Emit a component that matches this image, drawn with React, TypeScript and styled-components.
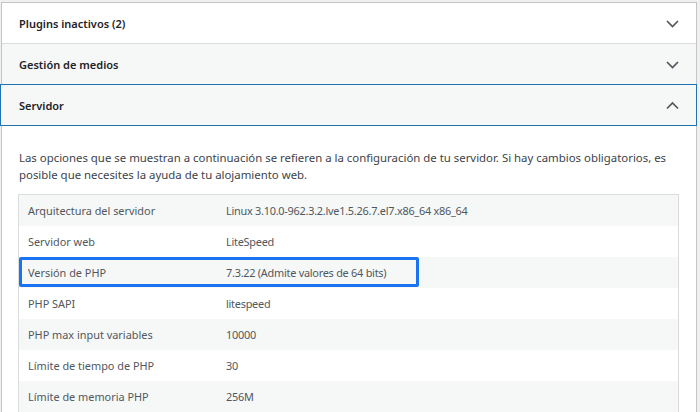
import React from "react";
import styled, { createGlobalStyle } from "styled-components";

const Global = createGlobalStyle`
  html, body { margin: 0; padding: 0; background: #f0f0f1; }
  body { font-family: "Noto Sans", "Open Sans", "Liberation Sans", sans-serif; }
  * { box-sizing: border-box; }
`;

const Page = styled.div`
  padding: 2px 3px 0 1px;
  width: 700px;
  height: 412px;
  overflow: hidden;
`;

const Panel = styled.div`
  background: #fff;
  border: 1px solid #c3c4c7;
  border-bottom: none;
  min-height: 420px;
`;

const Header = styled.div<{ $bg: string; $active?: boolean }>`
  display: flex;
  align-items: center;
  justify-content: space-between;
  height: ${(p) => (p.$active ? "42px" : "41px")};
  padding: 0 17px 0 17px;
  background: ${(p) => p.$bg};
  border-bottom: 1px solid #dcdcde;
  font-size: 11px;
  font-weight: 600;
  color: #1d2327;
  ${(p) =>
    p.$active &&
    `
    border: 1px solid #2271b1;
    margin: -1px -1px 0 -2px;
    padding-left: 18px;
    padding-right: 17px;
    position: relative;
  `}
`;

const Chevron = styled.svg`
  width: 13px;
  height: 13px;
  flex: none;
`;

const Content = styled.div`
  padding: 24px 16px 0 16px;
`;

const Description = styled.p`
  margin: 0 0 11px 1px;
  font-size: 11.4px;
  line-height: 16.6px;
  color: #3c434a;
`;

const Table = styled.div`
  border: 1px solid #dcdcde;
  border-bottom: none;
  margin-right: 1px;
`;

const Row = styled.div<{ $alt: boolean }>`
  position: relative;
  display: grid;
  grid-template-columns: 198px 1fr;
  align-items: center;
  height: 31px;
  background: ${(p) => (p.$alt ? "#f6f7f7" : "#fff")};
  font-size: 10.9px;
  color: #50575e;
`;

const Cell = styled.div`
  padding-left: 9px;
  white-space: nowrap;
`;

const ValueCell = styled(Cell)`
  letter-spacing: -0.25px;
`;

const Highlight = styled.div`
  position: absolute;
  left: 0;
  top: 0;
  width: 400px;
  height: 30px;
  border: 3px solid #1a73f0;
  border-radius: 2px;
  pointer-events: none;
`;

const ChevronIcon = ({ up }: { up?: boolean }) => (
  <Chevron viewBox="0 0 13 13">
    <path
      d={up ? "M1 9.5 L6.5 4 L12 9.5" : "M1 4 L6.5 9.5 L12 4"}
      fill="none"
      stroke="#50575e"
      strokeWidth="1.7"
    />
  </Chevron>
);

const rows: [string, string][] = [
  ["Arquitectura del servidor", "Linux 3.10.0-962.3.2.lve1.5.26.7.el7.x86_64 x86_64"],
  ["Servidor web", "LiteSpeed"],
  ["Versión de PHP", "7.3.22 (Admite valores de 64 bits)"],
  ["PHP SAPI", "litespeed"],
  ["PHP max input variables", "10000"],
  ["Límite de tiempo de PHP", "30"],
  ["Límite de memoria PHP", "256M"],
];

export default function App() {
  return (
    <>
      <Global />
      <Page>
        <Panel>
          <Header $bg="#fff">
            <span>Plugins inactivos (2)</span>
            <ChevronIcon />
          </Header>
          <Header $bg="#f6f7f7">
            <span>Gestión de medios</span>
            <ChevronIcon />
          </Header>
          <Header $bg="#f6f7f7" $active>
            <span>Servidor</span>
            <ChevronIcon up />
          </Header>
          <Content>
            <Description>
              Las opciones que se muestran a continuación se refieren a la configuración de tu servidor. Si hay cambios obligatorios, es posible que necesites la ayuda de tu alojamiento web.
            </Description>
            <Table>
              {rows.map(([k, v], i) => (
                <Row key={k} $alt={i % 2 === 0}>
                  <Cell>{k}</Cell>
                  <ValueCell>{v}</ValueCell>
                  {i === 2 && <Highlight />}
                </Row>
              ))}
            </Table>
          </Content>
        </Panel>
      </Page>
    </>
  );
}
